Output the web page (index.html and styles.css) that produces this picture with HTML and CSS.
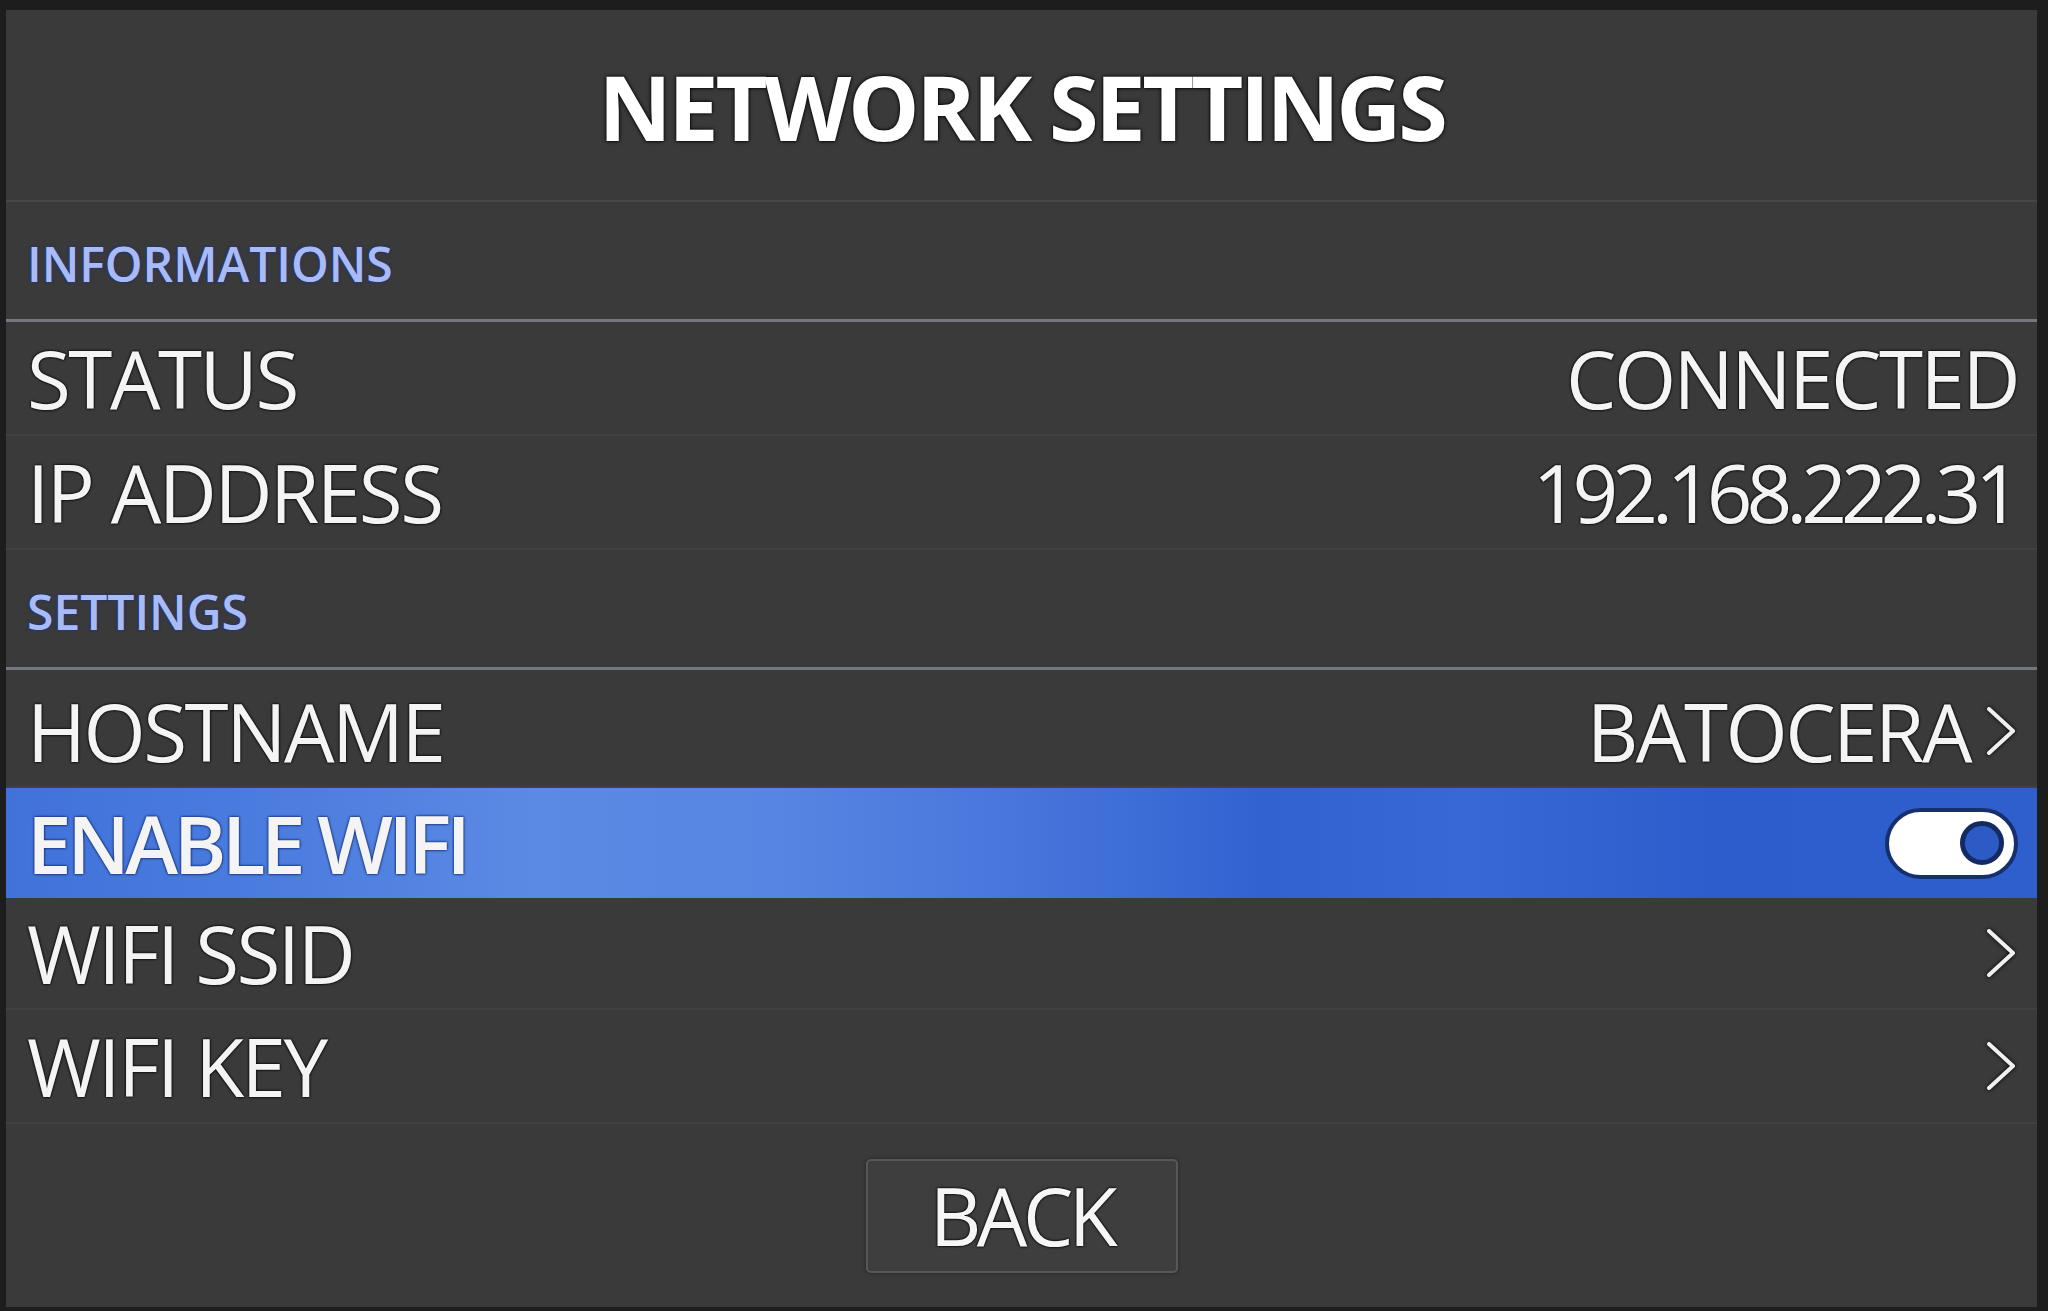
FILE: index.html
```html
<!DOCTYPE html>
<html lang="en">
<head>
<meta charset="utf-8">
<title>Network Settings</title>
<link rel="stylesheet" href="styles.css">
</head>
<body>
<div class="screen">
  <div class="panel">
    <header class="title-bar"><h1 class="title">NETWORK SETTINGS</h1></header>
    <div class="list">
      <div class="group-header">INFORMATIONS</div>
      <div class="row"><span class="label">STATUS</span><span class="value">CONNECTED</span></div>
      <div class="row"><span class="label">IP ADDRESS</span><span class="value num">192.168.222.31</span></div>
      <div class="group-header">SETTINGS</div>
      <div class="row row-tall"><span class="label">HOSTNAME</span><span class="value">BATOCERA<svg class="chevron" viewBox="0 0 34 56"><polyline points="5,6 29,28 5,50"/></svg></span></div>
      <div class="row selected"><span class="label">ENABLE WIFI</span><span class="switch"><span class="knob"></span></span></div>
      <div class="row row-short"><span class="label">WIFI SSID</span><span class="value"><svg class="chevron" viewBox="0 0 34 56"><polyline points="5,6 29,28 5,50"/></svg></span></div>
      <div class="row"><span class="label">WIFI KEY</span><span class="value"><svg class="chevron" viewBox="0 0 34 56"><polyline points="5,6 29,28 5,50"/></svg></span></div>
    </div>
    <footer class="footer"><button class="back-btn">BACK</button></footer>
  </div>
</div>
</body>
</html>
```
FILE: styles.css
```css
html, body {
  margin: 0;
  padding: 0;
  background: #1d1d1e;
  width: 2048px;
  height: 1311px;
  overflow: hidden;
  font-family: "Open Sans", "Noto Sans", sans-serif;
  color: #f4f4f4;
}

.screen {
  padding: 10px 11px 4px 6px;
  height: 1311px;
  box-sizing: border-box;
}

.panel {
  background: #3a3a3a;
  height: 100%;
  display: flex;
  flex-direction: column;
}

.title-bar {
  height: 192px;
  display: flex;
  align-items: center;
  justify-content: center;
  border-bottom: 2px solid #474747;
  box-sizing: border-box;
}

.title {
  margin: 0;
  font-size: 90px;
  font-weight: 700;
  line-height: 1;
  letter-spacing: -3.3px;
  color: #ffffff;
  text-shadow: 0 0 4px #000, 0 0 2px #000;
  padding-top: 2px;
}

.list {
  display: flex;
  flex-direction: column;
}

.group-header {
  height: 120px;
  box-sizing: border-box;
  border-bottom: 3px solid #75777f;
  display: flex;
  align-items: center;
  padding: 6px 0 0 21px;
  font-size: 48px;
  font-weight: 600;
  line-height: 1;
  color: #a8bbf5;
  text-shadow: 0 0 3px #22388a, 0 0 2px #1b2c70;
}

.row {
  height: 114px;
  box-sizing: border-box;
  border-bottom: 2px solid #414141;
  display: flex;
  align-items: center;
  justify-content: space-between;
  padding: 0 19px 0 21px;
  font-size: 80px;
  line-height: 1;
  text-shadow: 0 0 3px #000, 0 0 2px #000;
  flex-shrink: 0;
}

.row-tall {
  height: 118px;
  padding-top: 6px;
}

.row-short {
  height: 112px;
}

.label {
  letter-spacing: -2.5px;
}

.value {
  display: flex;
  align-items: center;
  letter-spacing: -2.5px;
}

.value.num {
  letter-spacing: -6px;
  margin-right: 3px;
}

.chevron {
  width: 34px;
  height: 56px;
  margin-left: 14px;
  overflow: visible;
}

.chevron polyline {
  fill: none;
  stroke: #f0f0f0;
  stroke-width: 4;
  stroke-linecap: round;
  stroke-linejoin: round;
  filter: drop-shadow(0 0 2px #000);
}

.row.selected {
  height: 110px;
  border-bottom: none;
  background: linear-gradient(90deg, #4172da 0%, #4a7bde 12%, #5b8ae4 26%, #5685e3 38%, #4676db 50%, #3262d0 62%, #3868d5 72%, #2d5dcc 84%, #2f5fcd 100%);
}

.row.selected .label {
  font-weight: 600;
  letter-spacing: -4.5px;
  text-shadow: 0 0 3px #0d2366, 0 0 2px #0d2366;
}

.switch {
  width: 133px;
  height: 71px;
  box-sizing: border-box;
  border: 4px solid #16306f;
  border-radius: 36px;
  background: #ffffff;
  display: flex;
  align-items: center;
  justify-content: flex-end;
  padding-right: 10px;
}

.knob {
  width: 44px;
  height: 44px;
  box-sizing: border-box;
  border-radius: 50%;
  border: 5px solid #142a62;
  background: #2d5bc6;
}

.footer {
  flex: 1;
  display: flex;
  align-items: center;
  justify-content: center;
}

.back-btn {
  width: 312px;
  height: 114px;
  background: #3e3e3e;
  border: 2px solid #575757;
  border-radius: 5px;
  font-family: "Open Sans", "Noto Sans", sans-serif;
  font-size: 80px;
  line-height: 1;
  color: #f6f6f6;
  letter-spacing: -4.5px;
  text-shadow: 0 0 3px #000, 0 0 2px #000;
  padding: 0 0 2px 0;
  box-shadow: 0 0 4px rgba(0,0,0,0.35);
}
```
